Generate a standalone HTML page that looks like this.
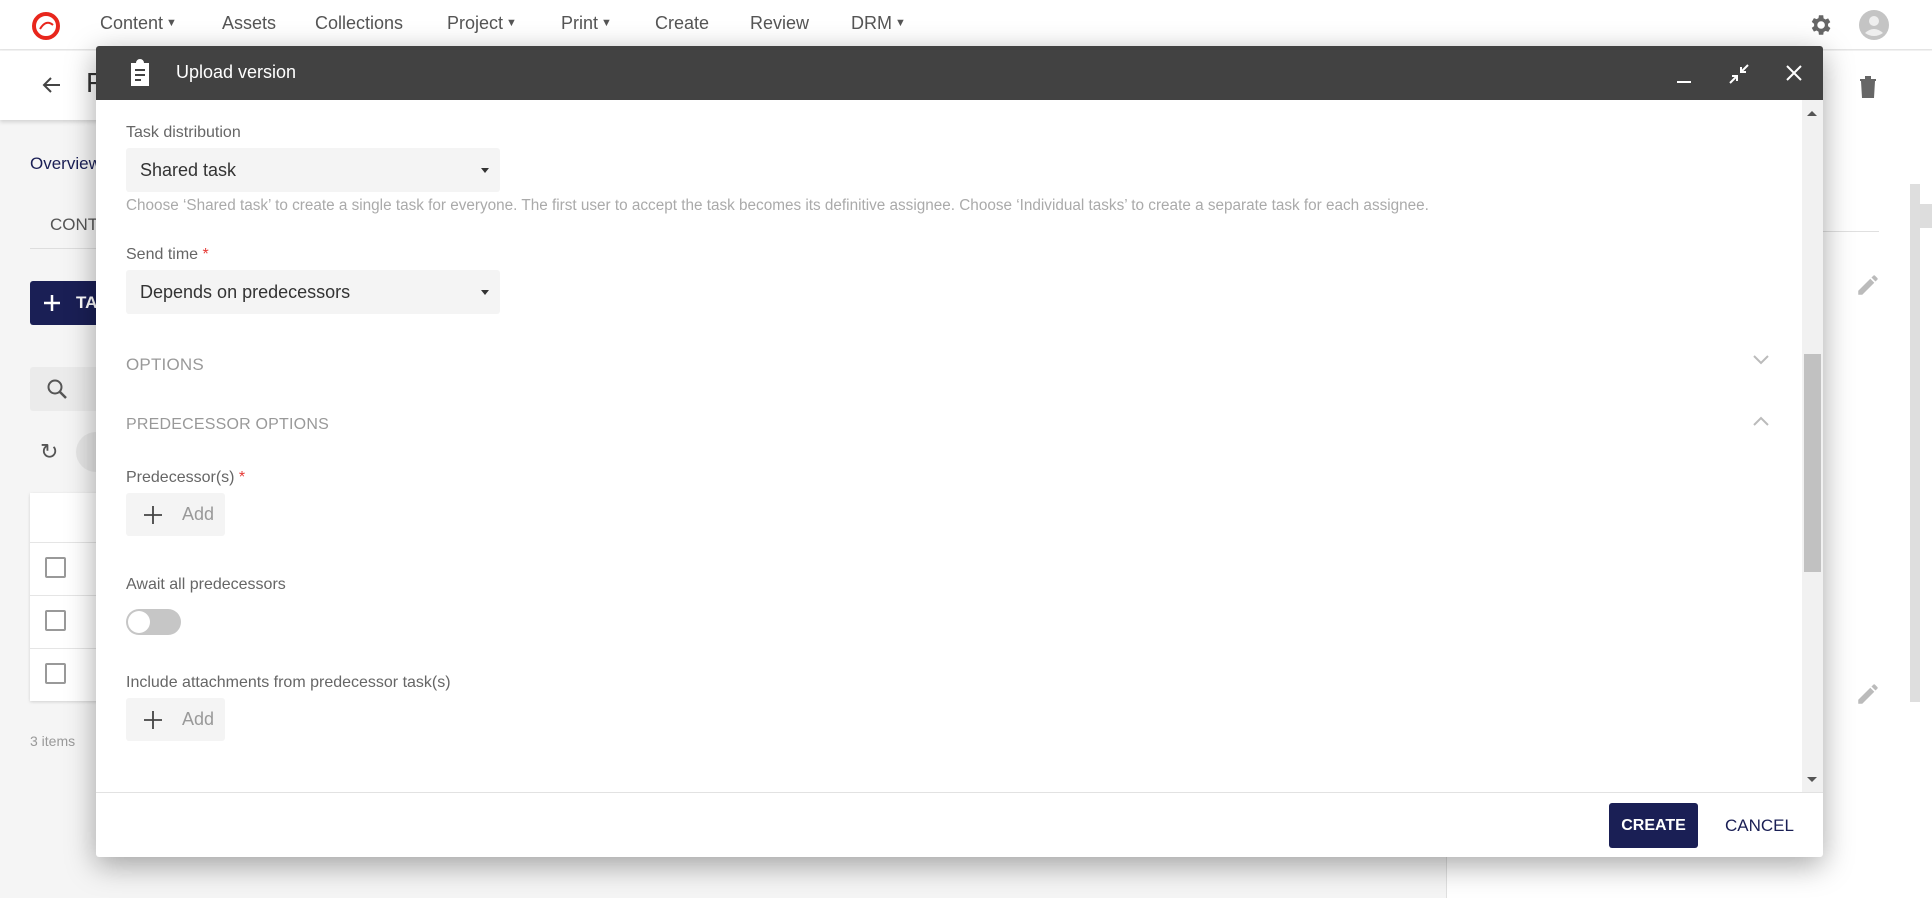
<!DOCTYPE html>
<html><head><meta charset="utf-8"><style>
*{box-sizing:border-box;margin:0;padding:0}
body{width:1932px;height:898px;overflow:hidden;background:#f5f5f5;font-family:"Liberation Sans",sans-serif;position:relative;color:#333}
.abs{position:absolute}
.nav{left:0;top:0;width:1932px;height:50px;background:#fff;border-bottom:1px solid #e6e6e6}
.nav span{position:absolute;top:13px;font-size:18px;color:#555}
.nav i{font-style:normal;font-size:11px;vertical-align:3px;margin-left:3px}
.hdr2{left:0;top:51px;width:1932px;height:69px;background:#fff;box-shadow:0 2px 4px rgba(0,0,0,.15)}
.dlg{left:96px;top:46px;width:1727px;height:811px;background:#fff;border-radius:3px;box-shadow:0 8px 30px rgba(0,0,0,.35);overflow:hidden}
.dh{left:0;top:0;width:1727px;height:54px;background:#424242}
.lbl{font-size:16px;color:#666}
.sel{width:374px;height:44px;background:#f4f4f4;border-radius:3px;font-size:18px;color:#333;padding:12px 14px}
.sel:after{content:"";position:absolute;right:11px;top:20px;border:4px solid transparent;border-top:5px solid #333}
.sec{font-size:17px;color:#999;letter-spacing:.2px}
.add{width:99px;height:43px;background:#f4f4f4;border-radius:3px}
.add b{position:absolute;left:56px;top:11px;font-weight:normal;font-size:18px;color:#999}
.star{color:#e53935}
</style></head><body>
<div class="abs nav">
 <svg class="abs" style="left:31px;top:11px" width="30" height="30" viewBox="0 0 30 30"><circle cx="15" cy="15" r="12" fill="none" stroke="#e8261c" stroke-width="4"/><path d="M9 18 Q15 8 22 14" stroke="#e8261c" stroke-width="2" fill="none"/></svg>
 <span style="left:100px">Content<i>▼</i></span><span style="left:222px">Assets</span><span style="left:315px">Collections</span><span style="left:447px">Project<i>▼</i></span><span style="left:561px">Print<i>▼</i></span><span style="left:655px">Create</span><span style="left:750px">Review</span><span style="left:851px">DRM<i>▼</i></span>
 <svg class="abs" style="left:1807px;top:12px" width="26" height="26" viewBox="0 0 24 24"><path fill="#666" d="M19.4 13a7.5 7.5 0 000-2l2.1-1.6-2-3.5-2.5 1a7 7 0 00-1.7-1L15 3h-4l-.4 2.6a7 7 0 00-1.7 1l-2.5-1-2 3.5L6.6 11a7.5 7.5 0 000 2l-2.2 1.6 2 3.5 2.5-1a7 7 0 001.7 1L11 21h4l.4-2.6a7 7 0 001.7-1l2.5 1 2-3.5zM13 15.5a3.5 3.5 0 110-7 3.5 3.5 0 010 7z"/></svg>
 <svg class="abs" style="left:1859px;top:10px" width="30" height="30" viewBox="0 0 30 30"><circle cx="15" cy="15" r="15" fill="#c4c4c4"/><circle cx="15" cy="11" r="5" fill="#eee"/><path d="M6 23 Q15 15 24 23 Q15 29 6 23z" fill="#eee"/></svg>
</div>
<div class="abs hdr2">
 <svg class="abs" style="left:40px;top:22px" width="24" height="24" viewBox="0 0 24 24"><path d="M20 12H5M11 5l-7 7 7 7" stroke="#444" stroke-width="2" fill="none"/></svg>
 <span class="abs" style="left:86px;top:16px;font-size:28px;color:#333">F</span>
 <svg class="abs" style="left:1856px;top:21px" width="24" height="28" viewBox="0 0 24 28"><path fill="#666" d="M4 7h16v2H4zM9 4h6v3H9zM5 9h14l-1 17H6z"/></svg>
</div>
<span class="abs" style="left:30px;top:154px;font-size:17px;color:#1a1f55">Overview</span>
<span class="abs" style="left:50px;top:215px;font-size:17px;color:#555">CONT</span>
<div class="abs" style="left:30px;top:248px;width:70px;height:1px;background:#ddd"></div>
<div class="abs" style="left:30px;top:281px;width:80px;height:44px;background:#1a1f55;border-radius:3px;color:#fff;font-size:17px;font-weight:bold">
 <svg class="abs" style="left:13px;top:13px" width="18" height="18" viewBox="0 0 18 18"><path d="M9 1v16M1 9h16" stroke="#fff" stroke-width="2.5"/></svg>
 <span class="abs" style="left:46px;top:12px">TA</span></div>
<div class="abs" style="left:30px;top:367px;width:80px;height:44px;background:#ebebeb;border-radius:3px"></div>
<svg class="abs" style="left:45px;top:377px" width="24" height="24" viewBox="0 0 24 24"><circle cx="10" cy="10" r="6.5" stroke="#555" stroke-width="2" fill="none"/><path d="M15 15l6 6" stroke="#555" stroke-width="2.5"/></svg>
<span class="abs" style="left:40px;top:439px;font-size:22px;color:#555">↻</span>
<div class="abs" style="left:76px;top:432px;width:40px;height:40px;border-radius:20px;background:#e6e6e6"></div>
<div class="abs" style="left:30px;top:493px;width:90px;height:208px;background:#fff;box-shadow:0 1px 3px rgba(0,0,0,.15)">
 <div class="abs" style="left:0;top:49px;width:90px;height:1px;background:#e5e5e5"></div>
 <div class="abs" style="left:0;top:102px;width:90px;height:1px;background:#e5e5e5"></div>
 <div class="abs" style="left:0;top:155px;width:90px;height:1px;background:#e5e5e5"></div>
 <div class="abs" style="left:15px;top:64px;width:21px;height:21px;border:2px solid #999;border-radius:2px"></div>
 <div class="abs" style="left:15px;top:117px;width:21px;height:21px;border:2px solid #999;border-radius:2px"></div>
 <div class="abs" style="left:15px;top:170px;width:21px;height:21px;border:2px solid #999;border-radius:2px"></div>
</div>
<span class="abs" style="left:30px;top:733px;font-size:14px;color:#999">3 items</span>
<div class="abs" style="left:1446px;top:120px;width:486px;height:778px;background:#fff"></div>
<div class="abs" style="left:1446px;top:120px;width:1px;height:778px;background:#e0e0e0"></div>
<div class="abs" style="left:1448px;top:231px;width:431px;height:1px;background:#e0e0e0"></div>
<svg class="abs" style="left:1855px;top:272px" width="26" height="26" viewBox="0 0 24 24"><path fill="#bbb" d="M3 17.3V21h3.7L17.8 9.9l-3.7-3.7zM20.7 7a1 1 0 000-1.4l-2.3-2.3a1 1 0 00-1.4 0l-1.8 1.8 3.7 3.7z"/></svg>
<svg class="abs" style="left:1855px;top:681px" width="26" height="26" viewBox="0 0 24 24"><path fill="#bbb" d="M3 17.3V21h3.7L17.8 9.9l-3.7-3.7zM20.7 7a1 1 0 000-1.4l-2.3-2.3a1 1 0 00-1.4 0l-1.8 1.8 3.7 3.7z"/></svg>
<div class="abs" style="left:1910px;top:184px;width:10px;height:518px;background:#dedede"></div>
<div class="abs" style="left:1920px;top:204px;width:12px;height:24px;background:#ddd"></div>

<div class="abs dlg">
 <div class="abs dh">
  <svg class="abs" style="left:32px;top:13px" width="24" height="28" viewBox="0 0 24 28"><path fill="#fff" d="M3 4h5a4 4 0 018 0h5v23H3z"/><rect x="7" y="10" width="10" height="2" fill="#424242"/><rect x="7" y="15" width="10" height="2" fill="#424242"/><rect x="7" y="20" width="6" height="2" fill="#424242"/></svg>
  <span class="abs" style="left:80px;top:16px;font-size:18px;color:#fff">Upload version</span>
  <div class="abs" style="left:1581px;top:35px;width:14px;height:2px;background:#fff"></div>
  <svg class="abs" style="left:1632px;top:17px" width="22" height="22" viewBox="0 0 22 22"><path d="M2 20l7-7M4 13h5v5M20 2l-7 7M13 4v5h5" stroke="#fff" stroke-width="2" fill="none"/></svg>
  <svg class="abs" style="left:1689px;top:18px" width="18" height="18" viewBox="0 0 18 18"><path d="M2 2l14 14M16 2L2 16" stroke="#fff" stroke-width="2"/></svg>
 </div>
 <div class="abs" style="left:1706px;top:54px;width:21px;height:692px;background:#f1f1f1"></div>
 <div class="abs" style="left:1708px;top:308px;width:17px;height:218px;background:#c1c1c1"></div>
 <div class="abs" style="left:1711px;top:65px;border:5px solid transparent;border-bottom:5px solid #555;border-top:0"></div>
 <div class="abs" style="left:1711px;top:731px;border:5px solid transparent;border-top:5px solid #555;border-bottom:0"></div>

 <span class="abs lbl" style="left:30px;top:78px">Task distribution</span>
 <div class="abs sel" style="left:30px;top:102px">Shared task</div>
 <span class="abs" style="left:30px;top:151px;font-size:15.3px;color:#aaa;white-space:nowrap">Choose ‘Shared task’ to create a single task for everyone. The first user to accept the task becomes its definitive assignee. Choose ‘Individual tasks’ to create a separate task for each assignee.</span>
 <span class="abs lbl" style="left:30px;top:200px">Send time <span class="star">*</span></span>
 <div class="abs sel" style="left:30px;top:224px">Depends on predecessors</div>
 <span class="abs sec" style="left:30px;top:309px">OPTIONS</span>
 <svg class="abs" style="left:1656px;top:307px" width="18" height="12" viewBox="0 0 18 12"><path d="M2 3l7 7 7-7" stroke="#bbb" stroke-width="2" fill="none"/></svg>
 <span class="abs sec" style="left:30px;top:370px;font-size:16px">PREDECESSOR OPTIONS</span>
 <svg class="abs" style="left:1656px;top:369px" width="18" height="12" viewBox="0 0 18 12"><path d="M2 10l7-7 7 7" stroke="#bbb" stroke-width="2" fill="none"/></svg>
 <span class="abs lbl" style="left:30px;top:423px">Predecessor(s) <span class="star">*</span></span>
 <div class="abs add" style="left:30px;top:447px"><svg class="abs" style="left:17px;top:12px" width="20" height="20" viewBox="0 0 20 20"><path d="M10 1v18M1 10h18" stroke="#444" stroke-width="1.8"/></svg><b>Add</b></div>
 <span class="abs lbl" style="left:30px;top:530px">Await all predecessors</span>
 <div class="abs" style="left:30px;top:563px;width:55px;height:26px;border-radius:13px;background:#c6c6c6"><div class="abs" style="left:2px;top:2px;width:22px;height:22px;border-radius:11px;background:#fff"></div></div>
 <span class="abs lbl" style="left:30px;top:628px">Include attachments from predecessor task(s)</span>
 <div class="abs add" style="left:30px;top:652px"><svg class="abs" style="left:17px;top:12px" width="20" height="20" viewBox="0 0 20 20"><path d="M10 1v18M1 10h18" stroke="#444" stroke-width="1.8"/></svg><b>Add</b></div>
 <div class="abs" style="left:0;top:746px;width:1727px;height:1px;background:#e2e2e2"></div>
 <div class="abs" style="left:1513px;top:757px;width:89px;height:45px;background:#1a1f55;border-radius:3px;color:#fff;font-weight:bold;font-size:16px;text-align:center;line-height:45px">CREATE</div>
 <span class="abs" style="left:1629px;top:770px;font-size:17px;color:#1a1f55">CANCEL</span>
</div>
</body></html>
